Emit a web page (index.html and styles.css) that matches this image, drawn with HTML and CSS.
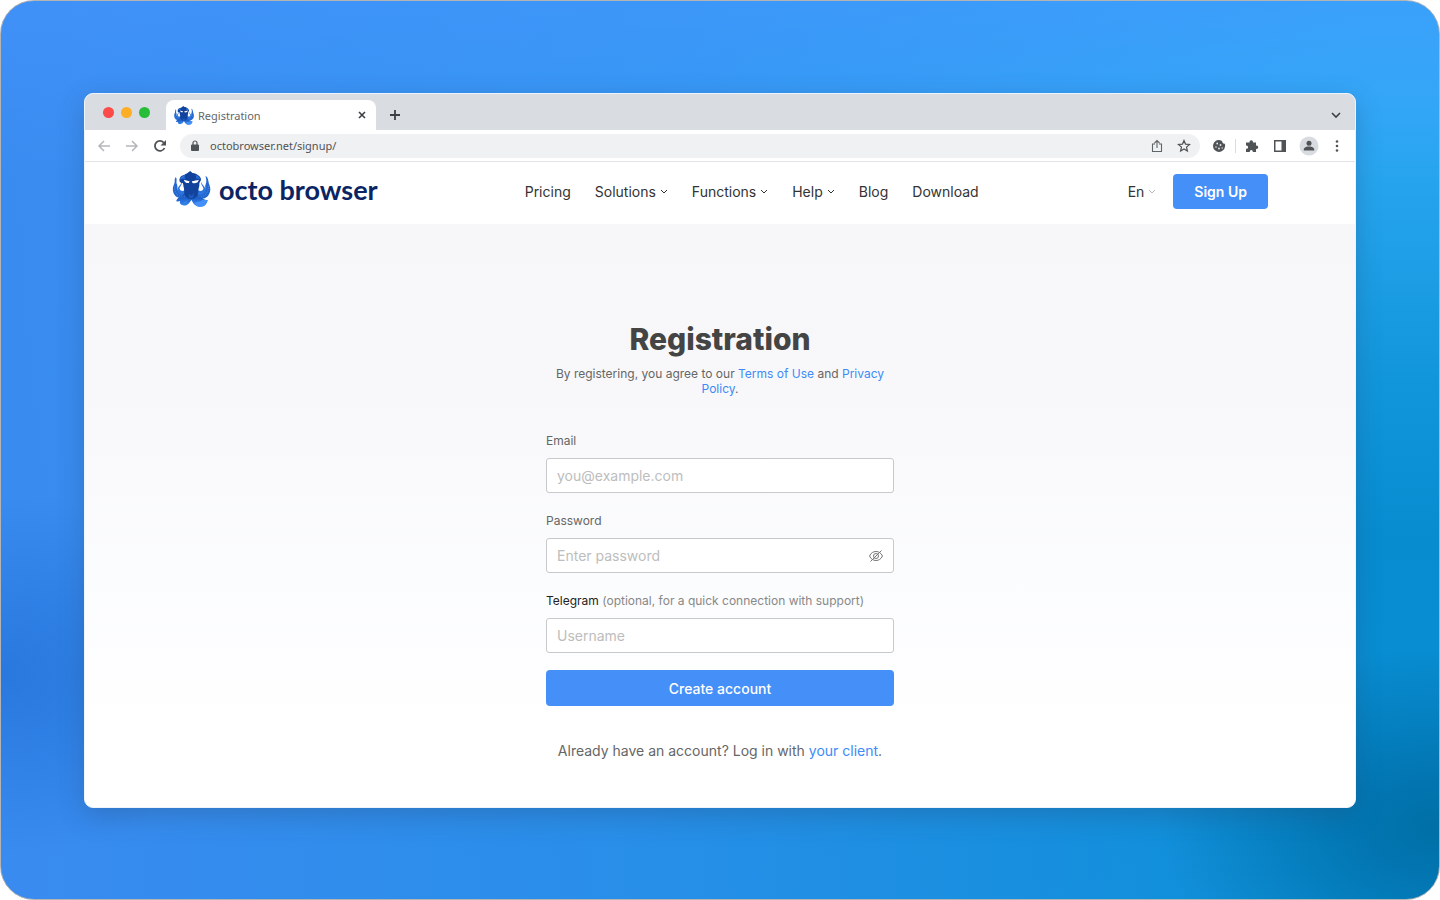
FILE: index.html
```html
<!DOCTYPE html>
<html lang="en">
<head>
    <meta charset="UTF-8">
    <meta name="viewport" content="width=device-width, initial-scale=1.0">
    <title>Registration</title>
    <link rel="stylesheet" href="styles.css">
</head>
<body>
    <svg class="defs" aria-hidden="true">
        <defs>
            <linearGradient id="skin" x1="0" y1="0" x2="0" y2="1">
                <stop offset="0" stop-color="#1246a2"/>
                <stop offset="0.5" stop-color="#1f62cc"/>
                <stop offset="1" stop-color="#3d8df6"/>
            </linearGradient>
        </defs>
        <symbol id="octopus" viewBox="0 0 114 108">
            <!-- outer arms -->
            <path d="M10 18C4 25 9 33 4 41C-1 51 0 66 9 75C18 83 31 83 44 77L44 58C34 68 24 68 18 61C12 53 17 47 13 39C10 32 15 26 10 18Z" fill="#2468cf"/>
            <path d="M99 14C110 22 106 32 111 42C116 55 113 69 104 77C94 86 80 83 68 77L68 58C79 69 89 69 95 61C101 54 96 46 100 38C103 30 101 23 99 14Z" fill="#2468cf"/>
            <path d="M27 32C31 43 18 48 22 55C25 62 34 60 42 56L44 68C30 76 16 70 15 58C13 46 26 44 27 32Z" fill="#2d75de"/>
            <path d="M87 32C83 43 96 48 92 55C89 62 80 60 72 56L70 68C84 76 99 70 99 58C101 46 88 44 87 32Z" fill="#2d75de"/>
            <!-- lower arms -->
            <path d="M40 60C34 76 15 76 11 90C17 94 20 90 23 89C20 96 24 101 31 103C43 106 50 97 57 86C62 98 70 108 84 107C99 107 102 99 106 87C98 91 95 83 88 80C80 76 73 70 72 58Z" fill="url(#skin)"/>
            <path d="M66 96C75 91 82 92 91 87C95 84 98 85 105 88C101 100 96 107 84 107C75 107 70 104 66 96Z" fill="#4390fa"/>
            <!-- head -->
            <path d="M21 25C22 17 27 13 36 11C40 8 43 7 46 5L53 0L60 6C67 6 73 10 80 15C86 20 88 28 82 33C79 38 82 42 79 50C77 58 78 70 71 77C63 87 50 87 41 77C33 68 36 58 34 50C31 41 34 36 28 36C22 35 20 31 21 25Z" fill="#12439c"/>
            <path d="M22 26C23 17 31 14 38 12C35 19 36 21 40 24C34 23 27 22 22 26ZM83 26C82 18 76 14 69 11C73 18 71 21 67 23C73 22 79 22 83 26Z" fill="#2b70d6"/>
            <path d="M34 26C40 29 46 28 51 31L49 36C42 37 36 34 34 26ZM58 31C65 28 72 29 79 26C77 35 70 38 60 36Z" fill="#fff"/>
            <path d="M48 66C53 76 60 76 65 64L62 82L50 82Z" fill="#1d59bd"/>
            <!-- suckers -->
            <path d="M5 46L7 59L14 71L24 77L36 76M108 45L106 60L99 71L89 77L78 76" fill="none" stroke="#7eb2fa" stroke-width="2" stroke-dasharray="2 5"/>
            <path d="M36 96L45 87" fill="none" stroke="#79b2ff" stroke-width="2" stroke-dasharray="3 4"/>
        </symbol>
        <symbol id="chevron" viewBox="0 0 8 8">
            <path d="M1 3L4 6L7 3" fill="none" stroke="currentColor"/>
        </symbol>
    </svg>

    <div class="stage">
        <div class="window">
            <div class="tab-strip">
                <div class="lights">
                    <span class="light red"></span>
                    <span class="light yellow"></span>
                    <span class="light green"></span>
                </div>
                <div class="tab">
                    <svg class="tab-icon"><use href="#octopus"/></svg>
                    <span class="tab-title">Registration</span>
                    <button class="icon-button" aria-label="Close tab">
                        <svg width="8" height="8" viewBox="0 0 8 8"><path d="M1 1L7 7M7 1L1 7" stroke="#3c4043" stroke-width="1.6"/></svg>
                    </button>
                </div>
                <button class="icon-button new-tab" aria-label="New tab">
                    <svg width="12" height="12" viewBox="0 0 12 12"><path d="M6 1V11M1 6H11" stroke="#3c4043" stroke-width="1.8"/></svg>
                </button>
                <button class="icon-button tab-search" aria-label="Search tabs">
                    <svg width="10" height="10" viewBox="0 0 10 10"><path d="M1 3L5 7L9 3" fill="none" stroke="#3c4043" stroke-width="1.6"/></svg>
                </button>
            </div>

            <div class="toolbar">
                <div class="history">
                    <button class="icon-button" aria-label="Back">
                        <svg width="14" height="14" viewBox="0 0 14 14"><path d="M13 7H2M7 2L2 7L7 12" fill="none" stroke="#b4b6b9" stroke-width="1.5"/></svg>
                    </button>
                    <button class="icon-button" aria-label="Forward">
                        <svg width="14" height="14" viewBox="0 0 14 14"><path d="M1 7H12M7 2L12 7L7 12" fill="none" stroke="#b4b6b9" stroke-width="1.5"/></svg>
                    </button>
                    <button class="icon-button" aria-label="Reload">
                        <svg width="14" height="14" viewBox="0 0 14 14"><path d="M11.5 9A5 5 0 1 1 11 4" fill="none" stroke="#505356" stroke-width="1.8"/><path d="M13 1V6.5H7.5Z" fill="#505356"/></svg>
                    </button>
                </div>
                <div class="address">
                    <svg width="10" height="12" viewBox="0 0 10 12"><rect x="1" y="4.5" width="8" height="6.5" rx="1" fill="#505356"/><path d="M3 5V3A2 2 0 0 1 7 3V5" fill="none" stroke="#505356" stroke-width="1.2"/></svg>
                    <input class="address-input" type="text" aria-label="Address" value="octobrowser.net/signup/">
                    <button class="icon-button" aria-label="Share">
                        <svg width="12" height="14" viewBox="0 0 12 14"><path d="M4 5H1.5V12.5H10.5V5H8M6 9V1.5M3.5 4L6 1.5L8.5 4" fill="none" stroke="#606367" stroke-width="1.1"/></svg>
                    </button>
                    <button class="icon-button" aria-label="Bookmark">
                        <svg width="14" height="14" viewBox="0 0 14 14"><path d="M7 1.5L8.5 5.1L12.6 5.5L9.5 8.1L10.4 12L7 9.9L3.6 12L4.5 8.1L1.4 5.5L5.5 5.1Z" fill="none" stroke="#505356" stroke-width="1.2"/></svg>
                    </button>
                </div>
                <div class="extensions">
                    <button class="icon-button" aria-label="Cookies">
                        <svg width="14" height="14" viewBox="0 0 14 14"><path d="M6 1A6 6 0 1 0 13 7.500C13.500 6 13 4.500 12 4.500C11 4.500 10.500 4 10.500 3C10 1.500 8 0.700 6 1Z" fill="#505356"/><g fill="#e8e9ea"><circle cx="5.200" cy="4.500" r="0.900"/><circle cx="8.500" cy="6" r="0.900"/><circle cx="4" cy="8" r="0.800"/><circle cx="7" cy="9.500" r="0.900"/><circle cx="10.200" cy="9" r="0.700"/></g></svg>
                    </button>
                    <span class="divider"></span>
                    <button class="icon-button" aria-label="Extensions">
                        <svg width="14" height="14" viewBox="0 0 14 14"><path d="M1 3.500H4.500V3A1.700 1.700 0 0 1 8 3V3.500H11V6.500H11.500A1.700 1.700 0 0 1 11.500 10H11V13H7.800V12.500A1.500 1.500 0 0 0 4.800 12.500V13H1V9.800H1.500A1.600 1.600 0 0 0 1.500 6.600H1Z" fill="#505356"/></svg>
                    </button>
                    <button class="icon-button" aria-label="Side panel">
                        <svg width="14" height="14" viewBox="0 0 14 14"><path d="M1 1H13V13H1ZM2.500 2.500V11.500H8.500V2.500Z" fill="#505356" fill-rule="evenodd"/></svg>
                    </button>
                    <button class="icon-button profile" aria-label="Profile">
                        <svg width="20" height="20" viewBox="0 0 20 20"><circle cx="10" cy="10" r="9.500" fill="#d8dbe0"/><circle cx="10" cy="7.200" r="2.500" fill="#505356"/><path d="M4.800 14.500V13C5.500 11 8 10.600 10 10.600S14.500 11 15.200 13V14.500Z" fill="#505356"/></svg>
                    </button>
                    <button class="icon-button" aria-label="Menu">
                        <svg width="4" height="14" viewBox="0 0 4 14"><g fill="#505356"><circle cx="2" cy="2.500" r="1.300"/><circle cx="2" cy="7" r="1.300"/><circle cx="2" cy="11.500" r="1.300"/></g></svg>
                    </button>
                </div>
            </div>

            <header class="site-header">
                <a class="logo" href="#">
                    <svg class="logo-icon"><use href="#octopus"/></svg>
                    <span class="logo-text">octo browser</span>
                </a>
                <nav class="nav">
                    <a href="#">Pricing</a>
                    <a href="#">Solutions <svg class="chevron"><use href="#chevron"/></svg></a>
                    <a href="#">Functions <svg class="chevron"><use href="#chevron"/></svg></a>
                    <a href="#">Help <svg class="chevron"><use href="#chevron"/></svg></a>
                    <a href="#">Blog</a>
                    <a href="#">Download</a>
                </nav>
                <div class="actions">
                    <button class="language">En <svg class="chevron"><use href="#chevron"/></svg></button>
                    <a class="sign-up" href="#">Sign Up</a>
                </div>
            </header>

            <main class="page">
                <form class="form">
                    <h1>Registration</h1>
                    <p class="terms">By registering, you agree to our <a href="#">Terms of Use</a> and <a href="#">Privacy Policy</a>.</p>

                    <div class="field">
                        <label for="email">Email</label>
                        <input class="control" type="email" id="email" placeholder="you@example.com">
                    </div>
                    <div class="field">
                        <label for="password">Password</label>
                        <div class="control password">
                            <input type="password" id="password" placeholder="Enter password">
                            <button class="icon-button" type="button" aria-label="Show password">
                                <svg width="16" height="14" viewBox="0 0 16 14"><g fill="none" stroke="#777"><path d="M1.500 7C3 3.800 5.300 2.500 8 2.500S13 3.800 14.500 7C13 10.200 10.700 11.500 8 11.500S3 10.200 1.500 7Z"/><circle cx="8" cy="7" r="2.500"/><path d="M2.500 12.500L13.500 1.500"/></g></svg>
                            </button>
                        </div>
                    </div>
                    <div class="field">
                        <label for="telegram"><span class="strong">Telegram</span> <span class="optional">(optional, for a quick connection with support)</span></label>
                        <input class="control" type="text" id="telegram" placeholder="Username">
                    </div>

                    <button class="submit" type="submit">Create account</button>
                    <p class="login">Already have an account? Log in with <a href="#">your client</a>.</p>
                </form>
            </main>
        </div>
    </div>
</body>
</html>
```
FILE: styles.css
```css
* {
    box-sizing: border-box;
}

body {
    margin: 0;
    font-family: Inter, sans-serif;
    font-size: 14px;
    color: #444;
    background-color: #fff;
}

a {
    color: #3d8bf8;
    text-decoration: none;
}

button,
input {
    font-family: inherit;
}

svg {
    display: block;
    flex-shrink: 0;
}

.defs {
    position: absolute;
    width: 0;
    height: 0;
}

.stage {
    display: flex;
    min-height: 100vh;
    padding: 92px 83px 91px;
    border: 1px solid #b4b4b4;
    border-radius: 34px;
    background:
        radial-gradient(ellipse 280px 180px at 100% 92%, #006fa6 0%, rgba(0, 112, 170, 0.8) 30%, rgba(0, 130, 200, 0) 100%),
        radial-gradient(ellipse 260px 180px at 0 75%, #2878de 0%, rgba(40, 120, 222, 0) 100%),
        linear-gradient(180deg, rgba(70, 150, 255, 0.5) 0%, rgba(70, 150, 255, 0) 20%),
        linear-gradient(90deg, #3a8bf0 0%, rgba(52, 142, 240, 0.7) 45%, rgba(46, 160, 240, 0) 95%),
        linear-gradient(180deg, #2fabf6 0%, #2fabf6 10%, #1296db 42%, #078cd0 60%, #0a90d6 100%);
}

.window {
    display: flex;
    flex: 1;
    flex-direction: column;
    border: 1px solid #eef4fb;
    border-radius: 9px;
    background-color: #fff;
    box-shadow: 0 8px 26px rgba(40, 70, 110, 0.3);
    overflow: hidden;
}

/* Browser chrome */
.icon-button {
    display: flex;
    align-items: center;
    justify-content: center;
    padding: 0;
    border: none;
    background: none;
    cursor: pointer;
}

.tab-strip {
    display: flex;
    align-items: flex-end;
    height: 36px;
    padding-right: 14px;
    background-color: #d9dce1;
}

.lights {
    display: flex;
    gap: 7px;
    padding: 0 16px 12px 18px;
}

.light {
    width: 11px;
    height: 11px;
    border-radius: 50%;
}

.red {
    background-color: #fc4b48;
}

.yellow {
    background-color: #fdae25;
}

.green {
    background-color: #27bd38;
}

.tab {
    display: flex;
    align-items: center;
    width: 210px;
    height: 30px;
    padding: 0 10px 0 8px;
    border-radius: 8px 8px 0 0;
    background-color: #fff;
}

.tab-icon {
    width: 20px;
    height: 19px;
}

.tab-title {
    flex: 1;
    padding-left: 4px;
    font-family: "Noto Sans", sans-serif;
    font-size: 11px;
    color: #64676b;
}

.new-tab {
    height: 30px;
    margin-left: 13px;
}

.tab-search {
    height: 30px;
    margin-left: auto;
}

.toolbar {
    display: flex;
    align-items: center;
    height: 32px;
    border-bottom: 1px solid #e1e3e6;
}

.history {
    display: flex;
    gap: 14px;
    padding: 0 13px 0 12px;
}

.address {
    display: flex;
    flex: 1;
    align-items: center;
    gap: 14px;
    height: 24px;
    padding: 0 9px 0 10px;
    border-radius: 12px;
    background-color: #f0f1f3;
}

.address-input {
    flex: 1;
    min-width: 0;
    margin-left: -4px;
    padding: 0;
    border: none;
    outline: none;
    background: none;
    font-family: "Noto Sans", sans-serif;
    font-size: 11px;
    color: #505356;
}

.extensions {
    display: flex;
    align-items: center;
    gap: 14px;
    padding: 0 16px 0 12px;
}

.divider {
    width: 1px;
    height: 14px;
    margin: 0 -5px;
    background-color: #dadce0;
}

.profile {
    margin: 0 2px 0 -2px;
}

/* Site header */
.site-header {
    display: flex;
    align-items: center;
    height: 62px;
    padding: 0 87px 4px;
}

.logo {
    display: flex;
    align-items: center;
    gap: 8px;
    padding-bottom: 4px;
    color: #0b2463;
}

.logo-icon {
    width: 39px;
    height: 36px;
}

.logo-text {
    font-family: Lato, sans-serif;
    font-size: 27px;
    font-weight: 700;
}

.nav {
    display: flex;
    gap: 24px;
    margin-left: 147px;
}

.nav a,
.language {
    display: flex;
    align-items: center;
    gap: 4px;
    font-size: 14px;
    color: #333;
}

.chevron {
    width: 8px;
    height: 8px;
}

.actions {
    display: flex;
    align-items: center;
    gap: 17px;
    margin-left: auto;
}

.language {
    padding: 0;
    border: none;
    background: none;
}

.language .chevron {
    color: #bbb;
}

.sign-up {
    padding: 0 21px;
    border-radius: 4px;
    background-color: #458ff8;
    font-weight: 600;
    line-height: 35px;
    color: #fff;
}

/* Registration form */
.page {
    flex: 1;
    padding: 96px 24px 40px;
    background: linear-gradient(#f7f7f9 0%, #f8f8fa 30%, #fbfcfe 60%, #fff 90%);
}

.form {
    max-width: 348px;
    margin: 0 auto;
}

h1 {
    margin: 0;
    font-size: 30px;
    font-weight: 800;
    line-height: 38px;
    text-align: center;
    color: #444;
}

.terms {
    margin: 8px 0 37px;
    font-size: 12px;
    line-height: 15px;
    text-align: center;
    color: #666;
}

.field {
    display: flex;
    flex-direction: column;
    gap: 9px;
    margin-bottom: 20px;
}

.field label {
    font-size: 12px;
    line-height: 16px;
    color: #666;
}

.field .strong {
    color: #222;
}

.field .optional {
    color: #888;
}

.control {
    width: 100%;
    height: 35px;
    padding: 0 10px;
    border: 1px solid #c8c9cc;
    border-radius: 3px;
    background-color: #fff;
    font-size: 14px;
    color: #444;
}

.password {
    display: flex;
    align-items: center;
    padding-right: 9px;
}

.password input {
    flex: 1;
    min-width: 0;
    padding: 0;
    border: none;
    outline: none;
    background: none;
    font-size: 14px;
}

input::placeholder {
    color: #bdbdbd;
}

.field:last-of-type {
    margin-bottom: 17px;
}

.submit {
    width: 100%;
    height: 36px;
    padding: 0;
    border: none;
    border-radius: 4px;
    background-color: #458ff8;
    font-size: 14px;
    font-weight: 500;
    color: #fff;
    cursor: pointer;
}

.login {
    margin: 36px 0 0;
    line-height: 18px;
    text-align: center;
    color: #666;
}
```
